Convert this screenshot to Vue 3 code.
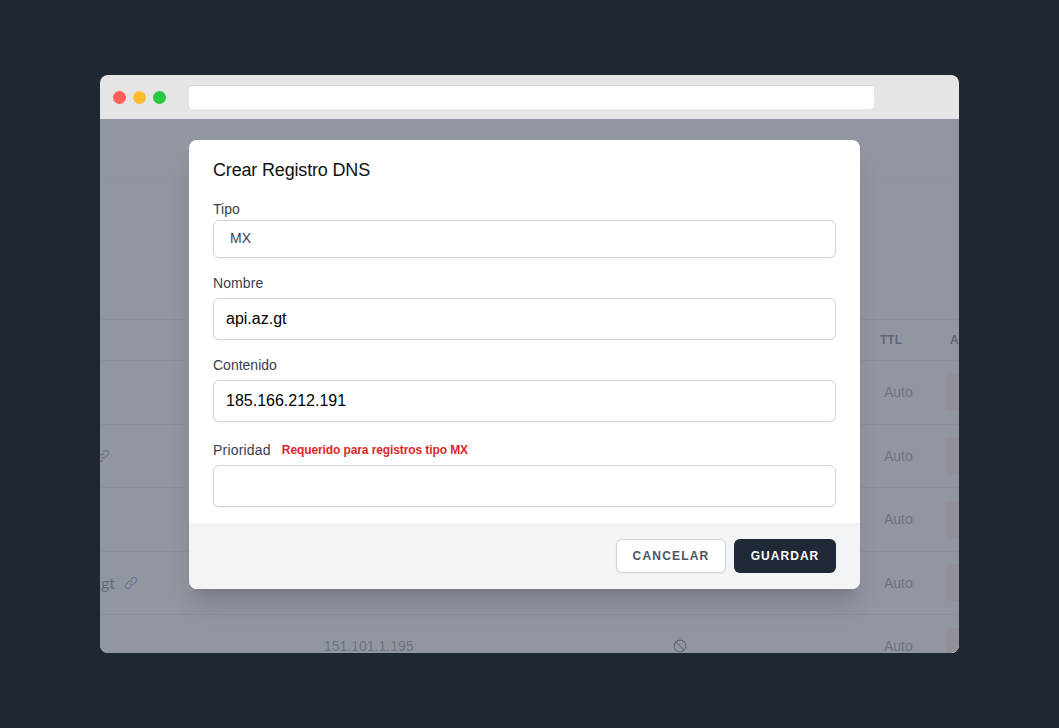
<script setup>
const rows = [
  { id: 1, cls: 'r1', name: '', link: false, ip: '', ban: false },
  { id: 2, cls: 'r2', name: 'www.az.gt', link: true, ip: '', ban: false },
  { id: 3, cls: 'r3', name: '', link: false, ip: '', ban: false },
  { id: 4, cls: 'r4', name: 'blog.az.gt', link: true, ip: '', ban: false },
  { id: 5, cls: 'r5', name: '', link: false, ip: '151.101.1.195', ban: true }
]
</script>

<template>
  <div class="page">
    <div class="window">
      <div class="titlebar">
        <div class="dots">
          <span class="dot red"></span>
          <span class="dot yellow"></span>
          <span class="dot green"></span>
        </div>
        <div class="address"></div>
      </div>
      <div class="content">
        <div class="app">
          <div class="nav"></div>
          <div class="hero"></div>
          <div class="thead">
            <span class="col-name"></span>
            <span class="col-ip"></span>
            <span class="col-proxy"></span>
            <span class="col-gap"></span>
            <span class="col-ttl th">TTL</span>
            <span class="col-act th">ACCIONES</span>
          </div>
          <div v-for="r in rows" :key="r.id" class="trow" :class="r.cls">
            <span class="col-name name">
              <span class="name-text">{{ r.name }}</span>
              <svg v-if="r.link" class="link" viewBox="0 0 24 24" fill="none" stroke="currentColor" stroke-width="2" stroke-linecap="round" stroke-linejoin="round">
                <path d="M13.8 10.2a4.5 4.5 0 0 0-6.4 0l-3.6 3.6a4.5 4.5 0 0 0 6.4 6.4l1.2-1.2" />
                <path d="M10.2 13.8a4.5 4.5 0 0 0 6.4 0l3.6-3.6a4.5 4.5 0 0 0-6.4-6.4l-1.2 1.2" />
              </svg>
            </span>
            <span class="col-ip ip">{{ r.ip }}</span>
            <span class="col-proxy proxy">
              <svg v-if="r.ban" class="ban" viewBox="0 0 24 24" fill="none" stroke="currentColor" stroke-width="2" stroke-linecap="round">
                <circle cx="12" cy="12" r="10" />
                <path d="M5 5l14 14" />
              </svg>
            </span>
            <span class="col-gap"></span>
            <span class="col-ttl auto">Auto</span>
            <span class="col-act"><span class="del"></span></span>
          </div>
        </div>

        <div class="overlay"></div>

        <div class="modal">
          <div class="modal-body">
            <h2 class="title">Crear Registro DNS</h2>
            <label class="label l-tipo">Tipo</label>
            <div class="select">MX</div>
            <label class="label l-nombre">Nombre</label>
            <input class="input" type="text" value="api.az.gt" />
            <label class="label l-contenido">Contenido</label>
            <input class="input" type="text" value="185.166.212.191" />
            <div class="label l-prioridad">
              <span class="prio">Prioridad</span>
              <span class="req">Requerido para registros tipo MX</span>
            </div>
            <input class="input" type="text" />
          </div>
          <div class="modal-foot">
            <button class="btn cancel" type="button">CANCELAR</button>
            <button class="btn save" type="button">GUARDAR</button>
          </div>
        </div>
      </div>
    </div>
  </div>
</template>

<style>
html, body { margin: 0; background: #1f2733; }
</style>

<style scoped>
* { box-sizing: border-box; }
.page {
  width: 1059px;
  height: 728px;
  padding: 75px 100px;
  background: #1f2733;
  font-family: "Liberation Sans", Arial, sans-serif;
}
.window {
  width: 859px;
  height: 578px;
  border-radius: 8px;
  overflow: hidden;
  display: flex;
  flex-direction: column;
}
.titlebar {
  height: 44px;
  flex: none;
  background: #e5e5e5;
  display: flex;
  align-items: center;
  padding-left: 13px;
}
.dots { display: flex; gap: 7px; width: 76px; }
.dot { width: 13px; height: 13px; border-radius: 50%; }
.red { background: #ff5f57; }
.yellow { background: #ffbd2e; }
.green { background: #28c840; }
.address {
  width: 685px;
  height: 24px;
  background: #fff;
  border-radius: 4px;
  border-top: 1px solid #d4d4d4;
}
.content { position: relative; flex: 1; overflow: hidden; }
.app { background: #fff; height: 100%; overflow: hidden; }
.nav { height: 62px; background: #fdfdfd; border-bottom: 1px solid #f5f6f8; }
.hero { height: 138px; background: #fff; }
.thead, .trow {
  display: grid;
  grid-template-columns: 224px 300px 112px 144px 70px 209px;
  align-items: center;
  border-top: 1px solid #e5e7eb;
}
.thead { height: 41px; }
.trow { height: 63.5px; }
.th { font-size: 12px; font-weight: 700; color: #374151; white-space: nowrap; }
.name {
  display: flex;
  justify-content: flex-end;
  align-items: center;
  white-space: nowrap;
  font-family: Lato, sans-serif;
  font-size: 16px;
  color: #4b5563;
  height: 24px;
}
.name-text { flex: none; }
.link { width: 14px; height: 14px; margin-left: 9px; color: #3b6fd4; opacity: .85; flex: none; }
.r2 .name { padding-right: 214px; }
.r4 .name { padding-right: 186px; }
.ip { font-size: 14px; color: #6b7280; white-space: nowrap; }
.proxy { display: flex; justify-content: center; color: #4b5563; }
.ban { width: 14px; height: 14px; }
.auto { font-size: 14px; color: #6b7280; padding-left: 4px; }
.del { display: block; width: 60px; height: 37px; border-radius: 6px; background: #fee2e2; margin-left: -4px; }
.overlay {
  position: absolute;
  inset: 0;
  background: rgba(110, 115, 128, 0.75);
}
.modal {
  position: absolute;
  left: 89px;
  top: 21px;
  width: 671px;
  height: 449px;
  background: #fff;
  border-radius: 8px;
  overflow: hidden;
  display: flex;
  flex-direction: column;
  box-shadow: 0 20px 25px -5px rgba(0, 0, 0, .14), 0 10px 10px -5px rgba(0, 0, 0, .06);
}
.modal-body { padding: 16px 24px 16px; flex: 1; display: flex; flex-direction: column; }
.title {
  margin: 0;
  font-size: 18px;
  font-weight: 400;
  line-height: 28px;
  color: #111;
  letter-spacing: -0.17px;
}
.label {
  display: block;
  font-size: 14px;
  line-height: 20px;
  color: #374151;
}
.l-tipo { margin-top: 15px; margin-bottom: 1px; }
.l-nombre { margin-top: 15px; margin-bottom: 5px; letter-spacing: 0.1px; }
.l-contenido { margin-top: 15px; margin-bottom: 5px; }
.l-prioridad { margin-top: 18px; margin-bottom: 5px; display: flex; gap: 11px; align-items: center; }
.prio { letter-spacing: 0.2px; }
.req { font-size: 12px; font-weight: 700; color: #dc2626; letter-spacing: -0.1px; }
.select {
  height: 38px;
  border: 1px solid #d1d5db;
  border-radius: 6px;
  padding: 0 0 2px 16px;
  display: flex;
  align-items: center;
  font-size: 14px;
  color: #374151;
  box-shadow: 0 1px 2px rgba(0,0,0,.05);
}
.input {
  display: block;
  width: 100%;
  height: 42px;
  border: 1px solid #d1d5db;
  border-radius: 6px;
  padding: 0 12px;
  font-family: "Liberation Sans", Arial, sans-serif;
  font-size: 16px;
  color: #000;
  background: #fff;
  outline: none;
  box-shadow: 0 1px 2px rgba(0,0,0,.05);
}
.modal-foot {
  flex: none;
  height: 66px;
  background: #f3f4f6;
  padding: 16px 24px;
  display: flex;
  justify-content: flex-end;
  gap: 8px;
}
.btn {
  height: 34px;
  border-radius: 6px;
  font-family: "Liberation Sans", Arial, sans-serif;
  font-size: 12px;
  font-weight: 700;
  display: flex;
  align-items: center;
  justify-content: center;
}
.cancel { width: 110px; background: #fff; color: #4b5563; border: 1px solid #d1d5db; box-shadow: 0 1px 2px rgba(0,0,0,.05); letter-spacing: 1.2px; }
.save { width: 102px; background: #1f2937; color: #fff; border: 1px solid transparent; letter-spacing: 1.05px; }
</style>
